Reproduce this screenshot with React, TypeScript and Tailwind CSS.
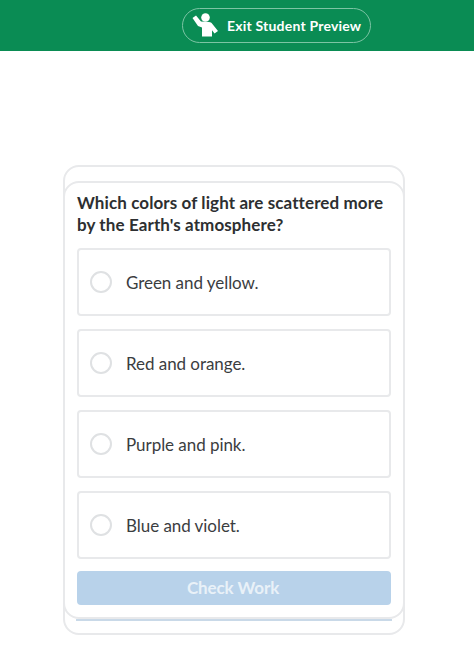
const options = ["Green and yellow.", "Red and orange.", "Purple and pink.", "Blue and violet."];

const App = () => {
    return (
        <div className="h-[648px] w-[474px] overflow-hidden bg-white font-['Lato',sans-serif]">
            <div className="flex h-[51px] items-start bg-[#0a8c54] pl-[182px] pt-[8px]">
                <button className="flex h-[35px] w-[189px] items-center rounded-full border border-[#7cc4a4] pl-[9px] text-white">
                    <svg className="h-[26px] w-[27px]" viewBox="0 0 27 26" fill="currentColor">
                        <circle cx="13.5" cy="4.5" r="4.3" />
                        <path d="M0.5 5 L4 2.5 L9 8.5 L17 9 C18.5 9.1 19.5 9.7 20.2 10.7 L26 18 L22.5 20.5 L20 17.2 L20 23.5 L10 23.5 L10 14.5 L6 13 Z" />
                    </svg>
                    <span className="ml-[8px] text-[14px] leading-none font-bold tracking-[0.2px]">Exit Student Preview</span>
                </button>
            </div>

            <div className="ml-[63px] mt-[114px] w-[342px] rounded-[16px] border-2 border-[#e8e9eb] bg-white pb-[12px] pt-[14px]">
                <div className="-mx-[2px] rounded-[16px] border-2 border-[#e8e9eb] bg-white px-[12px] pb-[12px] pt-[9px]">
                    <h2 className="text-[17px] leading-[22px] font-bold tracking-[0.1px] text-[#2d2f31]">
                        Which colors of light are scattered more by the Earth's atmosphere?
                    </h2>
                    <div className="mt-[12px] flex flex-col gap-[13px]">
                        {options.map((option) => (
                            <div key={option} className="flex h-[68px] items-center rounded-[4px] border-2 border-[#e8e9eb] pl-[11px]">
                                <span className="h-[22px] w-[22px] rounded-full border-2 border-[#dfe1e3]" />
                                <span className="ml-[14px] pt-[2px] text-[17px] tracking-[-0.05px] text-[#3b3d3f]">{option}</span>
                            </div>
                        ))}
                    </div>
                    <button className="mt-[12px] h-[34px] w-full rounded-[4px] bg-[#b8d2ea] pr-[2px] text-[17px] font-bold tracking-[-0.1px] text-[#e9f1f8]">
                        Check Work
                    </button>
                </div>
                <div className="mx-[11px] h-[2px] bg-[#c9d9e8]" />
            </div>
        </div>
    );
};

export default App;
